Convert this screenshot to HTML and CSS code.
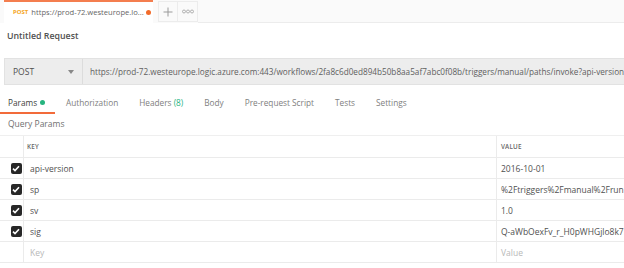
FILE: index.html
```html
<!DOCTYPE html>
<html>
<head>
<meta charset="utf-8">
<link rel="stylesheet" href="styles.css">
</head>
<body>
<div class="tabstrip">
  <div class="tab">
    <span class="tab-method">POST</span>
    <span class="tab-url">https://prod-72.westeurope.lo...</span>
    <span class="tab-dot"></span>
  </div>
  <div class="tab-btn first">
    <svg width="10" height="10" viewBox="0 0 10 10"><path d="M5 0.5V9.5M0.5 5H9.5" stroke="#9a9a9a" stroke-width="1"/></svg>
  </div>
  <div class="tab-btn">
    <svg width="12" height="5" viewBox="0 0 12 5"><circle cx="2" cy="2.5" r="1.5" fill="none" stroke="#a0a0a0" stroke-width="0.8"/><circle cx="6" cy="2.5" r="1.5" fill="none" stroke="#a0a0a0" stroke-width="0.8"/><circle cx="10" cy="2.5" r="1.5" fill="none" stroke="#a0a0a0" stroke-width="0.8"/></svg>
  </div>
  <div class="tab-fill"></div>
</div>

<div class="title">Untitled Request</div>

<div class="urlbar">
  <div class="method">
    <span>POST</span>
    <svg class="caret" width="6" height="4" viewBox="0 0 6 4"><path d="M0 0H6L3 4Z" fill="#888"/></svg>
  </div>
  <div class="url">https://prod-72.westeurope.logic.azure.com:443/workflows/2fa8c6d0ed894b50b8aa5af7abc0f08b/triggers/manual/paths/invoke?api-version=2016-10-01</div>
</div>

<div class="reqtabs">
  <div class="reqtab active">Params <span class="gdot"></span></div>
  <div class="reqtab">Authorization</div>
  <div class="reqtab">Headers <span class="green">(8)</span></div>
  <div class="reqtab">Body</div>
  <div class="reqtab">Pre-request Script</div>
  <div class="reqtab">Tests</div>
  <div class="reqtab">Settings</div>
</div>

<div class="section">Query Params</div>

<div class="table">
  <div class="row head">
    <div class="cb-cell"></div>
    <div class="key">KEY</div>
    <div class="val">VALUE</div>
  </div>
  <div class="row">
    <div class="cb-cell"><span class="cb"><svg width="8" height="7" viewBox="0 0 8 7"><path d="M1 3.6L3 5.5L7 1.2" fill="none" stroke="#fff" stroke-width="1.6"/></svg></span></div>
    <div class="key">api-version</div>
    <div class="val">2016-10-01</div>
  </div>
  <div class="row">
    <div class="cb-cell"><span class="cb"><svg width="8" height="7" viewBox="0 0 8 7"><path d="M1 3.6L3 5.5L7 1.2" fill="none" stroke="#fff" stroke-width="1.6"/></svg></span></div>
    <div class="key">sp</div>
    <div class="val">%2Ftriggers%2Fmanual%2Frun</div>
  </div>
  <div class="row">
    <div class="cb-cell"><span class="cb"><svg width="8" height="7" viewBox="0 0 8 7"><path d="M1 3.6L3 5.5L7 1.2" fill="none" stroke="#fff" stroke-width="1.6"/></svg></span></div>
    <div class="key">sv</div>
    <div class="val">1.0</div>
  </div>
  <div class="row">
    <div class="cb-cell"><span class="cb"><svg width="8" height="7" viewBox="0 0 8 7"><path d="M1 3.6L3 5.5L7 1.2" fill="none" stroke="#fff" stroke-width="1.6"/></svg></span></div>
    <div class="key">sig</div>
    <div class="val">Q-aWbOexFv_r_H0pWHGjlo8k7L</div>
  </div>
  <div class="row">
    <div class="cb-cell"></div>
    <div class="key ph">Key</div>
    <div class="val ph">Value</div>
  </div>
</div>
</body>
</html>
```

FILE: styles.css
```css
* { box-sizing: border-box; }
html, body { margin: 0; padding: 0; background: #fff; }
body {
  width: 624px;
  height: 268px;
  overflow: hidden;
  font-family: "Open Sans", "Noto Sans", sans-serif;
  color: #505050;
  font-size: 8.5px;
}
.tabstrip {
  display: flex;
  height: 23px;
  background: #fafafa;
  padding-left: 4px;
}
.tab {
  width: 149px;
  height: 23px;
  background: #fff;
  border-top: 2px solid #f47e4f;
  display: flex;
  align-items: center;
  padding-left: 9px;
  padding-bottom: 1px;
  white-space: nowrap;
  overflow: hidden;
}
.tab-method {
  color: #f5a623;
  font-size: 6px;
  font-weight: 700;
  margin-right: 3px;
}
.tab-url {
  color: #666;
  font-size: 7.6px;
}
.tab-dot {
  width: 5px;
  height: 5px;
  border-radius: 50%;
  background: #f26b2a;
  margin-left: 2px;
  flex: none;
}
.tab-btn {
  width: 20px;
  height: 21px;
  margin-top: 1px;
  border: 1px solid #ececec;
  border-left: none;
  display: flex;
  align-items: center;
  justify-content: center;
  flex: none;
}
.tab-btn.first { border-left: 1px solid #ececec; margin-left: 5px; }
.tab-fill { flex: 1; border-bottom: 1px solid #ececec; }
.title {
  height: 27px;
  padding: 7px 0 0 7px;
  font-size: 8.8px;
  font-weight: 600;
  color: #505050;
}
.urlbar {
  margin-left: 4px;
  margin-top: 8px;
  height: 27px;
  display: flex;
  background: #ededed;
  border: 1px solid #e2e2e2;
  border-right: none;
  white-space: nowrap;
  overflow: hidden;
}
.method {
  width: 78px;
  flex: none;
  display: flex;
  align-items: center;
  padding-left: 8px;
  border-right: 1px solid #dcdcdc;
  font-size: 8.5px;
  color: #505050;
}
.method .caret { margin-left: auto; margin-right: 8px; }
.url {
  padding-left: 7px;
  display: flex;
  align-items: center;
  font-size: 8.2px;
  color: #606060;
}
.reqtabs {
  display: flex;
  margin-top: 9px;
  height: 20px;
}
.reqtab {
  padding: 3px 0 0;
  margin-right: 21px;
  color: #808080;
  font-size: 8.25px;
  white-space: nowrap;
}
.reqtab.active {
  color: #404040;
  border-bottom: 2px solid #f26b3a;
  padding-left: 8px;
  width: 55px;
  margin-right: 11px;
}
.gdot {
  display: inline-block;
  width: 5px;
  height: 5px;
  background: #26b47f;
  border-radius: 50%;
  vertical-align: 1px;
  margin-left: 1px;
}
.green { color: #26b47f; }
.section {
  height: 21px;
  padding: 4px 0 0 8px;
  color: #707070;
  font-size: 8.5px;
}
.table { border-top: 1px solid #efefef; }
.row {
  display: flex;
  height: 21px;
  border-bottom: 1px solid #ebebeb;
  align-items: stretch;
}
.row.head { height: 22px; }
.cb-cell {
  width: 24px;
  flex: none;
  border-right: 1px solid #ebebeb;
  display: flex;
  align-items: center;
  justify-content: center;
  padding-left: 9px;
}
.cb {
  width: 11px;
  height: 11px;
  background: #282828;
  border-radius: 2px;
  display: flex;
  align-items: center;
  justify-content: center;
}
.key {
  width: 473px;
  flex: none;
  border-right: 1px solid #ebebeb;
  padding-left: 6px;
  display: flex;
  align-items: center;
  font-size: 8.5px;
}
.val {
  flex: 1;
  padding-left: 4px;
  display: flex;
  align-items: center;
  font-size: 8.5px;
  white-space: nowrap;
  overflow: hidden;
}
.head .key { padding-left: 3px; }
.head .key, .head .val {
  font-size: 6.3px;
  font-weight: 600;
  color: #666;
  letter-spacing: 0.2px;
}
.ph { color: #b8b8b8; }
```
